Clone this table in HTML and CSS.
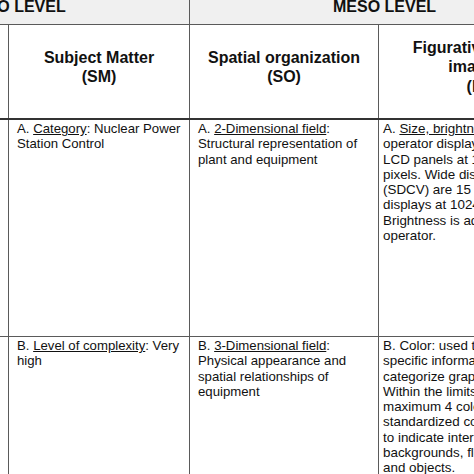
FILE: index.html
```html
<!DOCTYPE html>
<html>
<head>
<meta charset="utf-8">
<link rel="stylesheet" href="styles.css">
</head>
<body>
<table class="grid">
  <colgroup>
    <col class="c0">
    <col class="c1">
    <col class="c2">
    <col class="c3">
  </colgroup>
  <tr class="levels">
    <th colspan="2">MACRO LEVEL</th>
    <th colspan="2">MESO LEVEL</th>
  </tr>
  <tr class="heads">
    <th></th>
    <th>Subject Matter<br>(SM)</th>
    <th>Spatial organization<br>(SO)</th>
    <th>Figurative quality<br>imagery<br>(FI)</th>
  </tr>
  <tr class="row-a">
    <td></td>
    <td>A. <u>Category</u>: Nuclear Power<br>Station Control</td>
    <td>A. <u>2-Dimensional field</u>:<br>Structural representation of<br>plant and equipment</td>
    <td class="last">A. <u>Size, brightness</u>: The<br>operator displays are 21”<br>LCD panels at 1280x1024<br>pixels. Wide display panels<br>(SDCV) are 15 x 60”<br>displays at 1024x768.<br>Brightness is adjusted by<br>operator.</td>
  </tr>
  <tr class="row-b">
    <td></td>
    <td>B. <u>Level of complexity</u>: Very<br>high</td>
    <td>B. <u>3-Dimensional field</u>:<br>Physical appearance and<br>spatial relationships of<br>equipment</td>
    <td class="last">B. Color: used to code<br>specific information and<br>categorize graphics.<br>Within the limits of a<br>maximum 4 colors,<br>standardized colors used<br>to indicate interlocks,<br>backgrounds, flows<br>and objects.</td>
  </tr>
</table>
</body>
</html>
```
FILE: styles.css
```css
html, body {
  margin: 0;
  padding: 0;
  background: #ffffff;
  overflow: hidden;
  width: 474px;
  height: 474px;
}

.grid {
  border-collapse: collapse;
  table-layout: fixed;
  width: 754px;
  margin-left: -175px;
  margin-top: -10px;
  font-family: "Liberation Sans", Arial, sans-serif;
  color: #111111;
}

.c0 { width: 183px; }
.c1 { width: 181px; }
.c2 { width: 189px; }
.c3 { width: 201px; }

.grid th,
.grid td {
  border: 1px solid #5a5a5a;
  white-space: nowrap;
  overflow: hidden;
}

.levels th {
  background: #f0f0f0;
  border-top: none;
  font-size: 16px;
  font-weight: bold;
  line-height: 18px;
  height: 18px;
  padding: 8px 4px 8px;
  text-align: center;
}

.heads th {
  font-size: 16px;
  font-weight: bold;
  line-height: 19.5px;
  text-align: center;
  vertical-align: middle;
  height: 84px;
  padding: 0 4px 9px;
  border-bottom: 2px solid #333333;
}

.row-a td,
.row-b td {
  font-size: 13.2px;
  line-height: 15.3px;
  vertical-align: top;
  padding: 1px 8px 0;
}

.row-a td {
  height: 215px;
}

.row-b td {
  height: 200px;
}

.grid td.last {
  padding-left: 4px;
  font-size: 13.4px;
}

u {
  text-decoration: underline;
  text-underline-offset: 1px;
}
```
